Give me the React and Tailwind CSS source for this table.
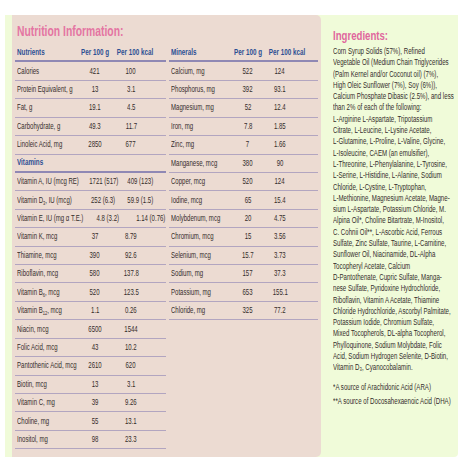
import React from 'react';

// Nutrition facts panel: pink table card on the left, green ingredients card behind/right.
const T = 'inline-block whitespace-nowrap origin-left scale-x-[0.67]';
const TC = 'inline-block whitespace-nowrap origin-center scale-x-[0.67]';
const TH = 'inline-block whitespace-nowrap origin-left scale-x-[0.7]';
const THC = 'inline-block whitespace-nowrap origin-center scale-x-[0.7]';

const LW = { label: 'w-[64px] pl-[2px]', c1: 'w-[32px]', c2: 'w-[40px]' };
const RW = { label: 'w-[62px] pl-[2px]', c1: 'w-[34px]', c2: 'w-[30px]' };

const sub = (base, s, rest) => (
  <>
    {base}
    <sub className="text-[6px] align-baseline relative top-[2px]">{s}</sub>
    {rest}
  </>
);

const nutrients = [
  { head: true, label: 'Nutrients', a: 'Per 100 g', b: 'Per 100 kcal', s2: 'pl-[8px]' },
  { label: 'Calories', a: '421', b: '100' },
  { label: 'Protein Equivalent, g', a: '13', b: '3.1' },
  { label: 'Fat, g', a: '19.1', b: '4.5' },
  { label: 'Carbohydrate, g', a: '49.3', b: '11.7' },
  { label: 'Linoleic Acid, mg', a: '2850', b: '677' },
  { head: true, label: 'Vitamins', a: '', b: '' },
  { label: 'Vitamin A, IU (mcg RE)', a: '1721 (517)', b: '409 (123)', s1: 'pl-[17px]', s2: 'pl-[18px]' },
  { label: sub('Vitamin D', '3', ', IU (mcg)'), a: '252 (6.3)', b: '59.9 (1.5)', s1: 'pl-[17px]', s2: 'pl-[19px]' },
  { label: 'Vitamin E, IU (mg α T.E.)', a: '4.8 (3.2)', b: '1.14 (0.76)', s1: 'pl-[25px]', s2: 'pl-[40px]' },
  { label: 'Vitamin K, mcg', a: '37', b: '8.79' },
  { label: 'Thiamine, mcg', a: '390', b: '92.6' },
  { label: 'Riboflavin, mcg', a: '580', b: '137.8' },
  { label: sub('Vitamin B', '6', ', mcg'), a: '520', b: '123.5' },
  { label: sub('Vitamin B', '12', ', mcg'), a: '1.1', b: '0.26' },
  { label: 'Niacin, mcg', a: '6500', b: '1544' },
  { label: 'Folic Acid, mcg', a: '43', b: '10.2' },
  { label: 'Pantothenic Acid, mcg', a: '2610', b: '620' },
  { label: 'Biotin, mcg', a: '13', b: '3.1' },
  { label: 'Vitamin C, mg', a: '39', b: '9.26' },
  { label: 'Choline, mg', a: '55', b: '13.1' },
  { label: 'Inositol, mg', a: '98', b: '23.3' },
];

const minerals = [
  { head: true, label: 'Minerals', a: 'Per 100 g', b: 'Per 100 kcal', s2: 'pl-[14px]' },
  { label: 'Calcium, mg', a: '522', b: '124' },
  { label: 'Phosphorus, mg', a: '392', b: '93.1' },
  { label: 'Magnesium, mg', a: '52', b: '12.4' },
  { label: 'Iron, mg', a: '7.8', b: '1.85' },
  { label: 'Zinc, mg', a: '7', b: '1.66' },
  { label: 'Manganese, mcg', a: '380', b: '90' },
  { label: 'Copper, mcg', a: '520', b: '124' },
  { label: 'Iodine, mcg', a: '65', b: '15.4' },
  { label: 'Molybdenum, mcg', a: '20', b: '4.75' },
  { label: 'Chromium, mcg', a: '15', b: '3.56' },
  { label: 'Selenium, mcg', a: '15.7', b: '3.73' },
  { label: 'Sodium, mg', a: '157', b: '37.3' },
  { label: 'Potassium, mg', a: '653', b: '155.1' },
  { label: 'Chloride, mg', a: '325', b: '77.2' },
];

const ingredients = [
  'Corn Syrup Solids (57%), Refined',
  'Vegetable Oil (Medium Chain Triglycerides',
  '(Palm Kernel and/or Coconut oil) (7%),',
  'High Oleic Sunflower (7%), Soy (6%)),',
  'Calcium Phosphate Dibasic (2.5%), and less',
  'than 2% of each of the following:',
  'L-Arginine L-Aspartate, Tripotassium',
  'Citrate, L-Leucine, L-Lysine Acetate,',
  'L-Glutamine, L-Proline, L-Valine, Glycine,',
  'L-Isoleucine, CAEM (an emulsifier),',
  'L-Threonine, L-Phenylalanine, L-Tyrosine,',
  'L-Serine, L-Histidine, L-Alanine, Sodium',
  'Chloride, L-Cystine, L-Tryptophan,',
  'L-Methionine, Magnesium Acetate, Magne-',
  'sium L-Aspartate, Potassium Chloride, M.',
  'Alpina Oil*, Choline Bitartrate, M-Inositol,',
  'C. Cohnii Oil**, L-Ascorbic Acid, Ferrous',
  'Sulfate, Zinc Sulfate, Taurine, L-Carnitine,',
  'Sunflower Oil, Niacinamide, DL-Alpha',
  'Tocopheryl Acetate, Calcium',
  'D-Pantothenate, Cupric Sulfate, Manga-',
  'nese Sulfate, Pyridoxine Hydrochloride,',
  'Riboflavin, Vitamin A Acetate, Thiamine',
  'Chloride Hydrochloride, Ascorbyl Palmitate,',
  'Potassium Iodide, Chromium Sulfate,',
  'Mixed Tocopherols, DL-alpha Tocopherol,',
  'Phylloquinone, Sodium Molybdate, Folic',
  'Acid, Sodium Hydrogen Selenite, D-Biotin,',
  'Vitamin D₃, Cyanocobalamin.',
];

function Row({ r, w }) {
  const line = r.head ? 'border-b-2 border-[#8f88b4]' : 'border-b border-[#b2a5c0]';
  if (r.head) {
    return (
      <div className={`flex items-center h-[18.43px] ${line} text-[#2d4f93] font-bold`}>
        <div className={`${w.label} shrink-0`}><span className={TH}>{r.label}</span></div>
        <div className={`${w.c1} shrink-0 flex justify-center`}><span className={THC}>{r.a}</span></div>
        <div className={`${w.c2} shrink-0 flex justify-center ${r.s2 || ''}`}><span className={THC}>{r.b}</span></div>
      </div>
    );
  }
  return (
    <div className={`flex items-center h-[18.43px] ${line} text-[#342d2b]`}>
      <div className={`${w.label} shrink-0`}><span className={T}>{r.label}</span></div>
      <div className={`${w.c1} shrink-0 flex justify-center ${r.s1 || ''}`}><span className={TC}>{r.a}</span></div>
      <div className={`${w.c2} shrink-0 flex justify-center ${r.s2 || ''}`}><span className={TC}>{r.b}</span></div>
    </div>
  );
}

export default function App() {
  return (
    <div className="w-[470px] h-[470px] bg-white pt-[15px] pl-[5px] font-['Liberation_Sans',Arial,sans-serif] overflow-hidden">
      <div className="flex w-[453px] h-[442px] bg-[#f0fbd9] rounded-br-[4px]">
        {/* nutrition card */}
        <div className="ml-[7px] w-[309px] h-full shrink-0 bg-[#ecdbd2] rounded-r-[5px]">
          <div className="h-[29px] pt-[4px] pl-[5px]">
            <span className="inline-block whitespace-nowrap origin-left scale-x-[0.74] text-[14px] leading-[18px] font-bold text-[#e475a2]">
              Nutrition Information:
            </span>
          </div>
          <div className="flex gap-[3px] pl-[3px] text-[9px] leading-[11px]">
            <div className="w-[151px]">
              {nutrients.map((r, i) => <Row key={i} r={r} w={LW} />)}
            </div>
            <div className="w-[149px]">
              {minerals.map((r, i) => <Row key={i} r={r} w={RW} />)}
            </div>
          </div>
        </div>

        {/* ingredients card */}
        <div className="flex-1 pl-[12px] pt-[8px] text-[#342d2b]">
          <div className="h-[16px]">
            <span className="inline-block whitespace-nowrap origin-left scale-x-[0.74] text-[13px] leading-[16px] font-bold text-[#e0669d]">
              Ingredients:
            </span>
          </div>
          <div className="mt-[7px] origin-left scale-x-[0.72] w-[170px] text-[8.5px] leading-[11.29px]">
            {ingredients.map((l, i) => (
              <div key={i} className="whitespace-nowrap">{l}</div>
            ))}
            <div className="mt-[8px] whitespace-nowrap">*A source of Arachidonic Acid (ARA)</div>
            <div className="mt-[3px] whitespace-nowrap">**A source of Docosahexaenoic Acid (DHA)</div>
          </div>
        </div>
      </div>
    </div>
  );
}
